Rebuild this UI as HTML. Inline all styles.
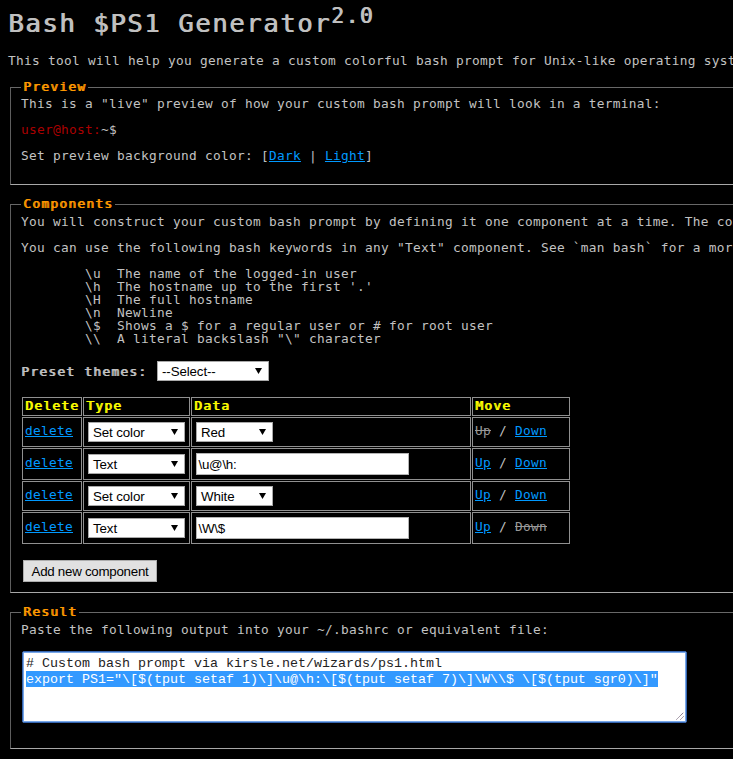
<!DOCTYPE html>
<html>
<head>
<meta charset="utf-8">
<title>Bash $PS1 Generator 2.0</title>
<style>
html, body { margin: 0; padding: 0; }
body {
  background: #000;
  color: #c2c2c2;
  font-family: "DejaVu Sans Mono", "Liberation Mono", monospace;
  font-size: 12.8px;
  letter-spacing: 0.2938px;
  width: 733px;
  height: 759px;
  overflow: hidden;
  position: relative;
}
a { color: #0099ff; text-decoration: underline; }
.t { position: absolute; white-space: pre; line-height: 13px; height: 13px; margin: 0; padding: 0; font-weight: normal; }
.b { letter-spacing: 1.2938px; text-shadow: 1px 0 0 currentColor; }
h1.t { font-size: 25.6px; line-height: 30px; height: 30px; letter-spacing: 1.5875px; text-shadow: 0.9px 0 0 currentColor; color: #c0c0c0; }
h1 sup { font-size: 21.3px; letter-spacing: 1.5063px; line-height: 0; vertical-align: baseline; position: relative; top: -8.5px; }
.fs { position: absolute; box-sizing: border-box; border: 1px solid; border-color: #686868 #a8a8a8 #a8a8a8 #5e5e5e; left: 10px; width: 1100px; }
.lg { background: #000; color: #ff9900; padding: 0 2px; }
.th { color: #ffff00; }
.cell { position: absolute; box-sizing: border-box; border: 1px solid #909090; }
.sel { position: absolute; box-sizing: border-box; height: 20px; background: #fff; border: 1px solid #a9a9a9; color: #000;
  font-family: "Liberation Sans", sans-serif; font-size: 13.3333px; letter-spacing: -0.12px; line-height: 18px; padding: 1px 0 0 4px; white-space: pre; overflow: hidden; }
.sel svg { position: absolute; right: 6px; top: 6px; }
.inp { position: absolute; box-sizing: border-box; height: 22px; background: #fff; border: 1px solid #b4b4b4; color: #000;
  font-family: "Liberation Sans", sans-serif; font-size: 13.3333px; letter-spacing: -0.25px; line-height: 20px; padding: 1px 0 0 1.5px; white-space: pre; overflow: hidden; }
.btn { position: absolute; box-sizing: border-box; background: #e1e1e1; border: 1px solid #adadad; color: #000;
  font-family: "Liberation Sans", sans-serif; font-size: 13.3333px; letter-spacing: -0.27px; line-height: 20px; padding-top: 0.6px; text-align: center; white-space: pre; overflow: hidden; }
.s { color: #999; text-decoration: line-through; }
.ta { position: absolute; box-sizing: border-box; background: #fff; border: 1px solid #3565b0; box-shadow: inset 0 0 0 1px #78a7e8; border-radius: 2px; color: #000;
  font-family: "Liberation Mono", monospace; font-size: 13.3333px; letter-spacing: 0; line-height: 16px; white-space: pre; }
.ta div { position: absolute; left: 3px; height: 16px; color: #222; }
.ta div span { position: relative; top: 1px; }
.ta .hl { background: #3399ff; color: #fff; }
</style>
</head>
<body>

<h1 class="t" style="left:8px;top:7.5px">Bash $PS1 Generator<sup>2.0</sup></h1>
<p class="t" style="left:8px;top:54px">This tool will help you generate a custom colorful bash prompt for Unix-like operating systems such as Linux and Mac OS X.</p>
<div class="fs" style="top:87px;height:98px"></div>
<div class="t b lg" style="left:21px;top:80px">Preview</div>
<div class="t" style="left:21px;top:97px">This is a "live" preview of how your custom bash prompt will look in a terminal:</div>
<div class="t" style="left:21px;top:123px"><span style="color:#aa0000">user@host:</span>~$</div>
<div class="t" style="left:21px;top:149px">Set preview background color: [<a>Dark</a> | <a>Light</a>]</div>
<div class="fs" style="top:204px;height:389px"></div>
<div class="t b lg" style="left:21px;top:197px">Components</div>
<div class="t" style="left:21px;top:215px">You will construct your custom bash prompt by defining it one component at a time. The components will be joined together in order.</div>
<div class="t" style="left:21px;top:241px">You can use the following bash keywords in any "Text" component. See `man bash` for a more complete list of keywords.</div>
<div class="t" style="left:85px;top:267px">\u  The name of the logged-in user</div>
<div class="t" style="left:85px;top:280px">\h  The hostname up to the first '.'</div>
<div class="t" style="left:85px;top:293px">\H  The full hostname</div>
<div class="t" style="left:85px;top:306px">\n  Newline</div>
<div class="t" style="left:85px;top:319px">\$  Shows a $ for a regular user or # for root user</div>
<div class="t" style="left:85px;top:332px">\\  A literal backslash "\" character</div>
<div class="t b" style="left:21px;top:365px">Preset themes:</div>
<div class="sel" style="left:157px;top:361px;width:112px">--Select--<svg width="7" height="6" viewBox="0 0 7 6"><path d="M0 0H7L3.5 6Z" fill="#000"/></svg></div>
<div class="cell" style="left:22px;top:397px;width:60px;height:19px"></div>
<div class="cell" style="left:83px;top:397px;width:107px;height:19px"></div>
<div class="cell" style="left:191px;top:397px;width:280px;height:19px"></div>
<div class="cell" style="left:472px;top:397px;width:98px;height:19px"></div>
<div class="cell" style="left:22px;top:417px;width:60px;height:30px"></div>
<div class="cell" style="left:83px;top:417px;width:107px;height:30px"></div>
<div class="cell" style="left:191px;top:417px;width:280px;height:30px"></div>
<div class="cell" style="left:472px;top:417px;width:98px;height:30px"></div>
<div class="cell" style="left:22px;top:448px;width:60px;height:32px"></div>
<div class="cell" style="left:83px;top:448px;width:107px;height:32px"></div>
<div class="cell" style="left:191px;top:448px;width:280px;height:32px"></div>
<div class="cell" style="left:472px;top:448px;width:98px;height:32px"></div>
<div class="cell" style="left:22px;top:481px;width:60px;height:30px"></div>
<div class="cell" style="left:83px;top:481px;width:107px;height:30px"></div>
<div class="cell" style="left:191px;top:481px;width:280px;height:30px"></div>
<div class="cell" style="left:472px;top:481px;width:98px;height:30px"></div>
<div class="cell" style="left:22px;top:512px;width:60px;height:32px"></div>
<div class="cell" style="left:83px;top:512px;width:107px;height:32px"></div>
<div class="cell" style="left:191px;top:512px;width:280px;height:32px"></div>
<div class="cell" style="left:472px;top:512px;width:98px;height:32px"></div>
<div class="t b th" style="left:25px;top:399px">Delete</div>
<div class="t b th" style="left:86px;top:399px">Type</div>
<div class="t b th" style="left:194px;top:399px">Data</div>
<div class="t b th" style="left:475px;top:399px">Move</div>
<div class="t" style="left:25px;top:424px"><a>delete</a></div>
<div class="sel" style="left:88px;top:422px;width:97px">Set color<svg width="7" height="6" viewBox="0 0 7 6"><path d="M0 0H7L3.5 6Z" fill="#000"/></svg></div>
<div class="sel" style="left:196px;top:422px;width:77px">Red<svg width="7" height="6" viewBox="0 0 7 6"><path d="M0 0H7L3.5 6Z" fill="#000"/></svg></div>
<div class="t" style="left:475px;top:424px"><span class="s">Up</span> / <a>Down</a></div>
<div class="t" style="left:25px;top:456px"><a>delete</a></div>
<div class="sel" style="left:88px;top:454px;width:97px">Text<svg width="7" height="6" viewBox="0 0 7 6"><path d="M0 0H7L3.5 6Z" fill="#000"/></svg></div>
<div class="inp" style="left:196px;top:453px;width:213px">\u@\h:</div>
<div class="t" style="left:475px;top:456px"><a>Up</a> / <a>Down</a></div>
<div class="t" style="left:25px;top:488px"><a>delete</a></div>
<div class="sel" style="left:88px;top:486px;width:97px">Set color<svg width="7" height="6" viewBox="0 0 7 6"><path d="M0 0H7L3.5 6Z" fill="#000"/></svg></div>
<div class="sel" style="left:196px;top:486px;width:77px">White<svg width="7" height="6" viewBox="0 0 7 6"><path d="M0 0H7L3.5 6Z" fill="#000"/></svg></div>
<div class="t" style="left:475px;top:488px"><a>Up</a> / <a>Down</a></div>
<div class="t" style="left:25px;top:520px"><a>delete</a></div>
<div class="sel" style="left:88px;top:518px;width:97px">Text<svg width="7" height="6" viewBox="0 0 7 6"><path d="M0 0H7L3.5 6Z" fill="#000"/></svg></div>
<div class="inp" style="left:196px;top:517px;width:213px">\W\$</div>
<div class="t" style="left:475px;top:520px"><a>Up</a> / <span class="s">Down</span></div>
<div class="btn" style="left:23px;top:560px;width:134px;height:22px">Add new component</div>
<div class="fs" style="top:612px;height:137px"></div>
<div class="t b lg" style="left:21px;top:605px">Result</div>
<div class="t" style="left:21px;top:623px">Paste the following output into your ~/.bashrc or equivalent file:</div>
<div class="ta" style="left:22px;top:651px;width:665px;height:72px"><div style="top:3px"><span># Custom bash prompt via kirsle.net/wizards/ps1.html</span></div><div class="hl" style="top:19px"><span>export PS1="\[$(tput setaf 1)\]\u@\h:\[$(tput setaf 7)\]\W\\$ \[$(tput sgr0)\]"</span></div><svg style="position:absolute;right:2px;bottom:2px" width="8" height="8" viewBox="0 0 8 8"><path d="M0.5 7.5L7.5 0.5M4.5 7.5L7.5 4.5" stroke="#6a5870" stroke-width="1" stroke-dasharray="1.1 0.5" fill="none"/></svg></div>
</body>
</html>
